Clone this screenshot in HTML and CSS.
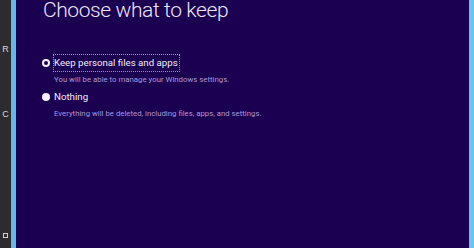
FILE: index.html
```html
<!DOCTYPE html>
<html lang="en">
<head>
  <meta charset="UTF-8">
  <title>Choose what to keep</title>
  <link rel="stylesheet" href="styles.css">
</head>
<body>
  <div class="screen">
    <div class="side">
      <span class="side-letter first">R</span>
      <span class="side-letter second">C</span>
      <span class="side-icon"></span>
    </div>

    <div class="setup">
      <h1>Choose what to keep</h1>

      <div class="options">
        <label class="option">
          <span class="radio checked"></span>
          <span class="option-text">
            <span class="option-name focused">Keep personal files and apps</span>
            <span class="option-desc">You will be able to manage your Windows settings.</span>
          </span>
        </label>

        <label class="option">
          <span class="radio"></span>
          <span class="option-text">
            <span class="option-name">Nothing</span>
            <span class="option-desc">Everything will be deleted, including files, apps, and settings.</span>
          </span>
        </label>
      </div>
    </div>

    <div class="edge"></div>
  </div>
</body>
</html>
```

FILE: styles.css
```css
* {
  margin: 0;
  padding: 0;
  box-sizing: border-box;
}

html,
body {
  overflow: hidden;
}

body {
  width: 474px;
  height: 248px;
  background: #1b0052;
  font-family: Roboto, 'Open Sans', sans-serif;
}

.screen {
  display: flex;
  width: 474px;
  height: 248px;
}

/* dark strip of the window behind */
.side {
  width: 11px;
  flex-shrink: 0;
  background: #2c2c2e;
  display: flex;
  flex-direction: column;
  align-items: center;
  color: #d8d8d8;
  font-size: 9px;
  font-family: 'Liberation Sans', sans-serif;
}

.side-letter.first {
  margin-top: 44px;
}

.side-letter.second {
  margin-top: 55px;
}

.side-icon {
  margin-top: auto;
  margin-bottom: 10px;
  width: 5px;
  height: 5px;
  border: 1px solid #cfcfcf;
}

/* setup dialog */
.setup {
  width: 458px;
  flex-shrink: 0;
  background: #1b0052;
  border-left: 5px solid #5fb8e8;
  padding-left: 27px;
  color: #ffffff;
}

.edge {
  width: 5px;
  flex-shrink: 0;
  background: #66c6ee;
}

.setup h1 {
  font-weight: 300;
  font-size: 21px;
  letter-spacing: -0.4px;
  line-height: 26px;
  margin-top: -3px;
  color: #ece8f6;
  white-space: nowrap;
}

.options {
  margin-top: 31px;
  display: flex;
  flex-direction: column;
  gap: 2px;
}

.option {
  display: flex;
  align-items: flex-start;
  gap: 3px;
  margin-left: -1px;
}

.radio {
  width: 8px;
  height: 8px;
  flex-shrink: 0;
  border-radius: 50%;
  background: #f4f2fa;
  margin-top: 5px;
  position: relative;
}

.radio.checked::after {
  content: "";
  position: absolute;
  left: 2px;
  top: 2px;
  width: 4px;
  height: 4px;
  border-radius: 50%;
  background: #1b0052;
}

.option-text {
  display: flex;
  flex-direction: column;
}

.option-name {
  font-size: 9.7px;
  line-height: 16px;
  color: #f0eef8;
  padding: 0 1px 0 0;
  align-self: flex-start;
  border: 1px solid transparent;
}

.option-name.focused {
  border: 1px dotted #9c8fc4;
}

.option-desc {
  font-size: 7.8px;
  line-height: 12px;
  margin-top: 2px;
  color: #a898d8;
  margin-left: 1px;
  white-space: nowrap;
}
```
